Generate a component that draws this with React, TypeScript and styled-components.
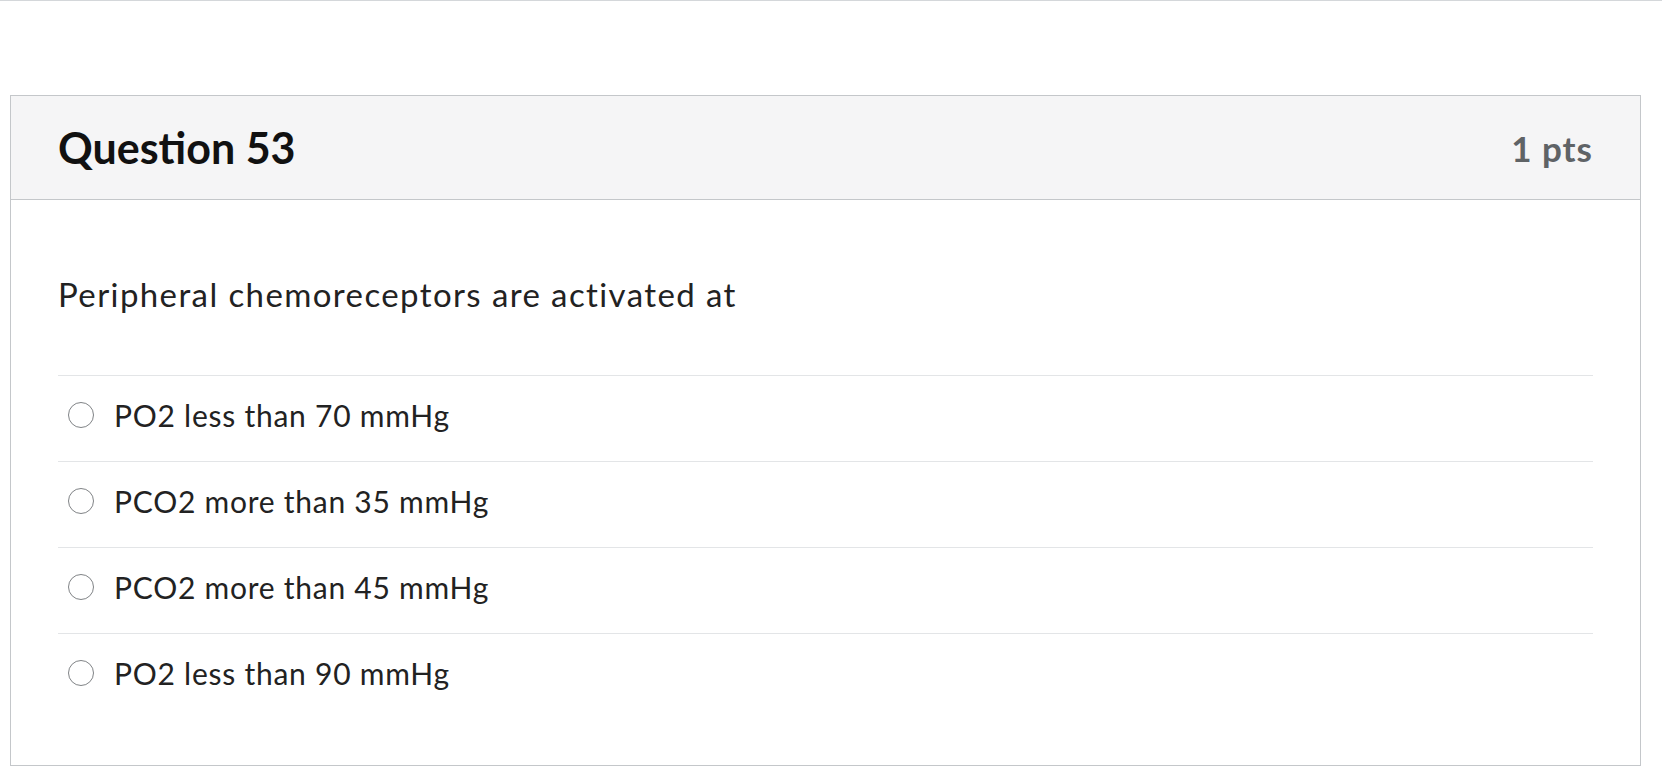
import React from "react";
import styled, { createGlobalStyle } from "styled-components";

const GlobalStyle = createGlobalStyle`
  *, *::before, *::after {
    box-sizing: border-box;
  }
  html, body {
    margin: 0;
    padding: 0;
    background: #ffffff;
    font-family: Lato, "Noto Sans", "Liberation Sans", sans-serif;
  }
`;

const Page = styled.div`
  border-top: 1px solid #d4d7da;
  padding: 94px 21px 0 10px;
`;

const Card = styled.div`
  border: 1px solid #c4c7ca;
  background: #ffffff;
`;

const Header = styled.header`
  display: flex;
  justify-content: space-between;
  align-items: center;
  height: 104px;
  padding: 0 47px;
  background: #f5f5f6;
  border-bottom: 1px solid #c4c7ca;
`;

const Title = styled.h2`
  margin: 0;
  font-size: 43px;
  font-weight: 700;
  color: #111;
`;

const Points = styled.span`
  font-size: 35px;
  font-weight: 700;
  letter-spacing: 1px;
  color: #5f6366;
`;

const Body = styled.div`
  padding: 72px 47px 46px;
`;

const QuestionText = styled.p`
  margin: 0 0 58px;
  font-size: 33px;
  line-height: 45px;
  letter-spacing: 1.4px;
  color: #222;
`;

const AnswerList = styled.div`
  display: flex;
  flex-direction: column;
`;

const Answer = styled.label`
  display: flex;
  align-items: center;
  gap: 20px;
  height: 86px;
  padding: 0 0 7px 10px;
  border-top: 1px solid #e3e5e7;
  font-size: 30px;
  letter-spacing: 0.75px;
  color: #222;
`;

const Radio = styled.span`
  width: 26px;
  height: 26px;
  border-radius: 50%;
  border: 1.5px solid #808386;
  background: #fff;
  flex-shrink: 0;
`;

const answers = [
  "PO2 less than 70 mmHg",
  "PCO2 more than 35 mmHg",
  "PCO2 more than 45 mmHg",
  "PO2 less than 90 mmHg",
];

function App() {
  return (
    <>
      <GlobalStyle />
      <Page>
        <Card>
          <Header>
            <Title>Question 53</Title>
            <Points>1 pts</Points>
          </Header>
          <Body>
            <QuestionText>Peripheral chemoreceptors are activated at</QuestionText>
            <AnswerList>
              {answers.map((a) => (
                <Answer key={a}>
                  <Radio />
                  {a}
                </Answer>
              ))}
            </AnswerList>
          </Body>
        </Card>
      </Page>
    </>
  );
}

export default App;
